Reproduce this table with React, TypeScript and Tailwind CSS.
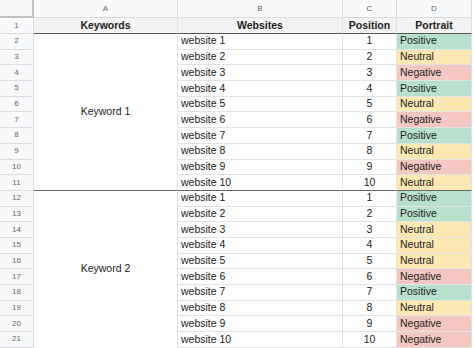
type Portrait = 'Positive' | 'Neutral' | 'Negative';

const groups: { keyword: string; portraits: Portrait[] }[] = [
  {
    keyword: 'Keyword 1',
    portraits: ['Positive', 'Neutral', 'Negative', 'Positive', 'Neutral', 'Negative', 'Positive', 'Neutral', 'Negative', 'Neutral'],
  },
  {
    keyword: 'Keyword 2',
    portraits: ['Positive', 'Positive', 'Neutral', 'Neutral', 'Neutral', 'Negative', 'Positive', 'Neutral', 'Negative', 'Negative'],
  },
];

const fill: Record<Portrait, string> = {
  Positive: 'bg-[#b7e1cd]',
  Neutral: 'bg-[#fce8b2]',
  Negative: 'bg-[#f4c7c3]',
};

const rowNum = 'flex items-center justify-center bg-[#f8f9fa] border-r border-b border-[#dadce0] text-[8px] text-[#666]';
const cell = 'flex items-center border-r border-b border-[#e2e3e3] px-[3px] text-[10.5px] text-[#222] whitespace-nowrap overflow-hidden';

export default function App() {
  let n = 1;
  return (
    <div className="w-[474px] h-[348px] overflow-hidden bg-white" style={{ fontFamily: '"Liberation Sans", Arial, sans-serif' }}>
      <div className="grid grid-cols-[34px_144px_165px_54px_75px] grid-rows-[18px_16px_repeat(20,15.7px)]">
        {/* column letters */}
        <div className="bg-[#f8f9fa] border-r-2 border-b-2 border-[#c0c0c0]" />
        {['A', 'B', 'C', 'D'].map((l) => (
          <div key={l} className="flex items-center justify-center bg-[#f8f9fa] border-r border-b border-[#dadce0] text-[8px] text-[#666]">
            {l}
          </div>
        ))}

        {/* header row */}
        <div className={rowNum}>1</div>
        {['Keywords', 'Websites', 'Position', 'Portrait'].map((h) => (
          <div key={h} className="flex items-center justify-center bg-[#f3f3f3] border-r border-[#e2e3e3] border-b-[1.5px] border-b-[#555] text-[10.5px] font-bold text-[#222]">
            {h}
          </div>
        ))}

        {groups.map((g) =>
          g.portraits.map((p, i) => {
            n += 1;
            const last = i === g.portraits.length - 1 && g.keyword === 'Keyword 1';
            const bottom = last ? 'border-b-[1.5px] border-b-[#666]' : '';
            return [
              <div key={`n${n}`} className={rowNum}>{n}</div>,
              i === 0 ? (
                <div
                  key={`k${n}`}
                  className={`row-span-10 flex items-center justify-center border-r border-[#e2e3e3] text-[10.5px] text-[#222] ${g.keyword === 'Keyword 1' ? 'border-b-[1.5px] border-b-[#666]' : ''}`}
                >
                  {g.keyword}
                </div>
              ) : null,
              <div key={`w${n}`} className={`${cell} ${bottom}`}>website {i + 1}</div>,
              <div key={`p${n}`} className={`${cell} justify-center ${bottom}`}>{i + 1}</div>,
              <div key={`r${n}`} className={`${cell} ${fill[p]} ${bottom}`}>{p}</div>,
            ];
          })
        )}
      </div>
    </div>
  );
}
